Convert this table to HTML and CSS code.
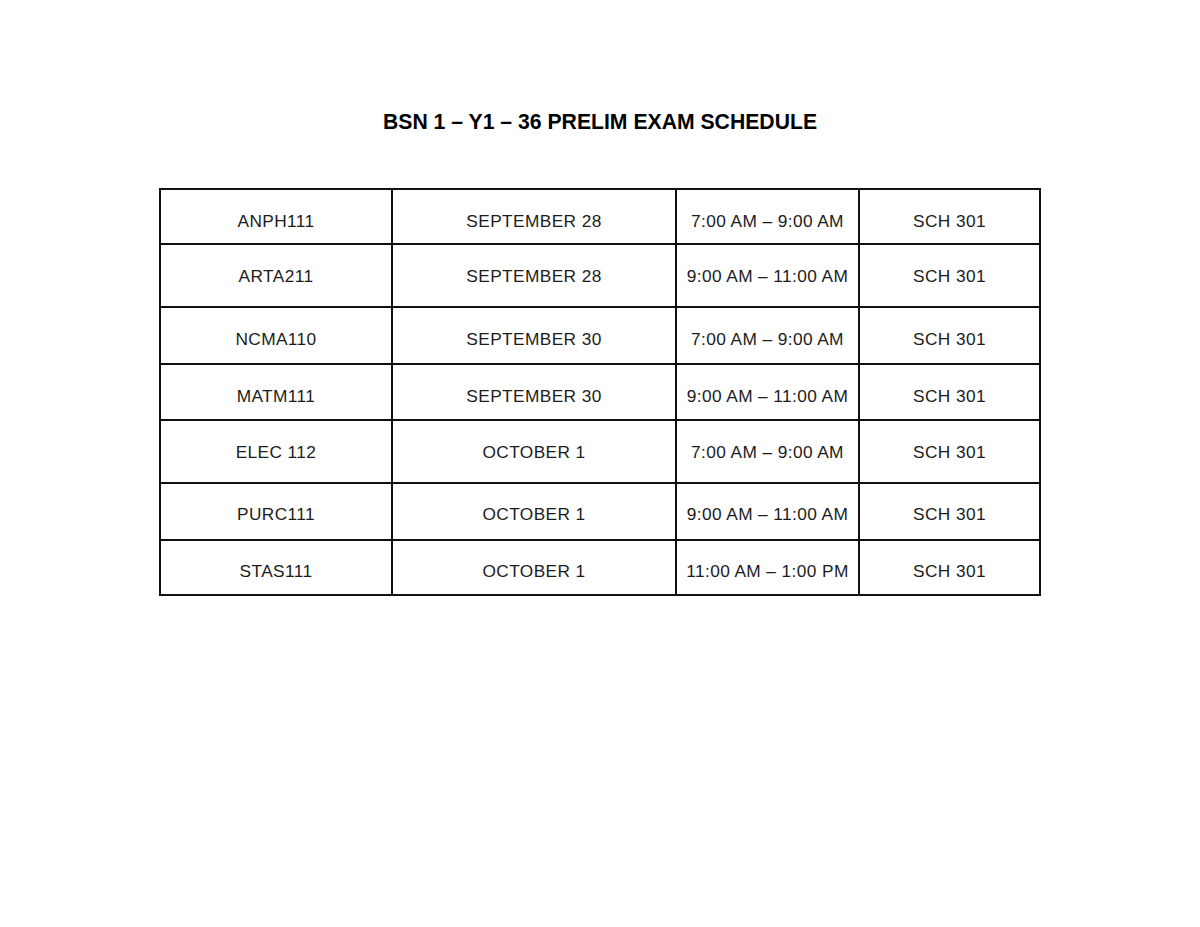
FILE: index.html
```html
<!DOCTYPE html>
<html>
<head>
<meta charset="utf-8">
<link rel="stylesheet" href="styles.css">
</head>
<body>
<div class="page">
  <h1 class="title">BSN 1 – Y1 – 36 PRELIM EXAM SCHEDULE</h1>
  <table class="sched">
    <colgroup>
      <col class="c1"><col class="c2"><col class="c3"><col class="c4">
    </colgroup>
    <tr class="r1"><td>ANPH111</td><td>SEPTEMBER 28</td><td>7:00 AM – 9:00 AM</td><td>SCH 301</td></tr>
    <tr class="r2"><td>ARTA211</td><td>SEPTEMBER 28</td><td>9:00 AM – 11:00 AM</td><td>SCH 301</td></tr>
    <tr class="r3"><td>NCMA110</td><td>SEPTEMBER 30</td><td>7:00 AM – 9:00 AM</td><td>SCH 301</td></tr>
    <tr class="r4"><td>MATM111</td><td>SEPTEMBER 30</td><td>9:00 AM – 11:00 AM</td><td>SCH 301</td></tr>
    <tr class="r5"><td>ELEC 112</td><td>OCTOBER 1</td><td>7:00 AM – 9:00 AM</td><td>SCH 301</td></tr>
    <tr class="r6"><td>PURC111</td><td>OCTOBER 1</td><td>9:00 AM – 11:00 AM</td><td>SCH 301</td></tr>
    <tr class="r7"><td>STAS111</td><td>OCTOBER 1</td><td>11:00 AM – 1:00 PM</td><td>SCH 301</td></tr>
  </table>
</div>
</body>
</html>
```

FILE: styles.css
```css
html, body {
  margin: 0;
  padding: 0;
  background: #fff;
}
body {
  width: 1200px;
  height: 927px;
  font-family: "Liberation Sans", Arial, sans-serif;
  color: #000;
}
.page {
  padding-top: 110px;
  display: flex;
  flex-direction: column;
  align-items: center;
}
.title {
  margin: 0;
  font-size: 21.2px;
  line-height: 24px;
  font-weight: bold;
  text-align: center;
}
.sched {
  margin-top: 54px;
  border-collapse: collapse;
  width: 880px;
  table-layout: fixed;
  font-size: 17.3px;
  line-height: 20px;
  letter-spacing: 0.4px;
  color: #1c1c1c;
}
.c1 { width: 232px; }
.c2 { width: 284px; }
.c3 { width: 183px; }
.c4 { width: 181px; }
.sched td {
  border: 2px solid #111;
  text-align: center;
  vertical-align: middle;
  padding: 0;
  white-space: nowrap;
}
.r1 td { height: 45px; padding-top: 8px; }
.r2 td { height: 61px; }
.r3 td { height: 48px; padding-top: 7px; }
.r4 td { height: 47px; padding-top: 7px; }
.r5 td { height: 61px; }
.r6 td { height: 50px; padding-top: 5px; }
.r7 td { height: 46px; padding-top: 7px; }
```
